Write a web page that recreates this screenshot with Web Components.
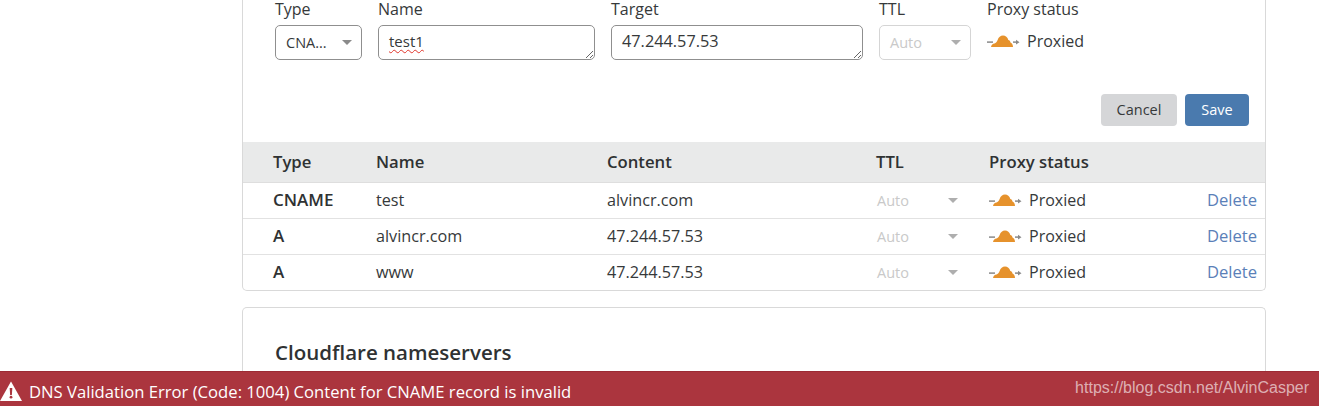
<!DOCTYPE html>
<html lang="en">
<head>
<meta charset="utf-8">
<title>DNS</title>
<style>
    html, body { margin: 0; height: 100%; overflow: hidden; background: #fff; }
    body { font-family: "Open Sans", "Noto Sans", sans-serif; font-size: 15px; color: #36393a; }
    main { display: flex; flex-direction: column; gap: 16px; width: 1024px; height: 406px; margin-left: 242px; overflow: hidden; }
</style>
</head>
<body>
<main>
    <dns-card>
        <dns-form></dns-form>
        <dns-table>
            <dns-row type="CNAME" name="test" content="alvincr.com"></dns-row>
            <dns-row type="A" name="alvincr.com" content="47.244.57.53"></dns-row>
            <dns-row type="A" name="www" content="47.244.57.53"></dns-row>
        </dns-table>
    </dns-card>
    <dns-card open-bottom>
        <h2 slot="heading">Cloudflare nameservers</h2>
    </dns-card>
</main>
<error-bar>DNS Validation Error (Code: 1004) Content for CNAME record is invalid</error-bar>

<script>
class DnsCard extends HTMLElement {
    connectedCallback() {
        this.attachShadow({ mode: 'open' });
        this.shadowRoot.innerHTML = `
            <style>
                :host {
                    display: block;
                    flex: none;
                    border: 1px solid #d9d9d9;
                    border-top: 0;
                    border-radius: 0 0 5px 5px;
                    box-sizing: border-box;
                }
                :host([open-bottom]) {
                    border-top: 1px solid #d9d9d9;
                    border-radius: 5px 5px 0 0;
                    padding: 31px 32px 0;
                    height: 99px;
                    border-bottom: 0;
                }
                ::slotted(h2) {
                    margin: 0;
                    font-size: 20.500px;
                    line-height: 27px;
                    font-weight: 600;
                    color: #2f3233;
                }
            </style>
            <slot name="heading"></slot>
            <slot></slot>
        `;
    }
}

class CfSelect extends HTMLElement {
    connectedCallback() {
        this.attachShadow({ mode: 'open' });
        this.shadowRoot.innerHTML = `
            <style>
                :host {
                    display: flex;
                    align-items: center;
                    justify-content: space-between;
                    box-sizing: border-box;
                    height: 35px;
                    padding: 0 9px 0 10px;
                    border: 1px solid #8f8f8f;
                    border-radius: 5px;
                    font-size: 14.500px;
                    color: #36393a;
                }
                :host([disabled]) { border-color: #d5d5d5; color: #c9c9c9; }
                :host([bare]) { border: 0; padding: 0; height: 35px; color: #c9c9c9; }
                span:first-child { margin-bottom: 6px; }
                :host([bare]) span:first-child { margin-bottom: 2px; }
                .caret {
                    width: 0;
                    height: 0;
                    margin-bottom: 1px;
                    border-left: 5px solid transparent;
                    border-right: 5px solid transparent;
                    border-top: 5px solid #8a8a8a;
                }
                :host([disabled]) .caret, :host([bare]) .caret { border-top-color: #aeaeae; }
            </style>
            <span><slot></slot></span>
            <span class="caret"></span>
        `;
    }
}

class CfField extends HTMLElement {
    connectedCallback() {
        this.attachShadow({ mode: 'open' });
        this.shadowRoot.innerHTML = `
            <style>
                :host {
                    display: block;
                    box-sizing: border-box;
                    width: 100%;
                    height: 35px;
                    padding: 5px 10px 0;
                    border: 1px solid #8f8f8f;
                    border-radius: 5px;
                    font-size: 16.300px;
                    line-height: 20px;
                    color: #36393a;
                    resize: both;
                    overflow: hidden;
                }
                ::slotted(span) {
                    font-size: 15px;
                    text-decoration: underline wavy #e0352b 1px;
                    text-underline-offset: 2px;
                }
            </style>
            <slot></slot>
        `;
    }
}

class CfProxy extends HTMLElement {
    connectedCallback() {
        this.attachShadow({ mode: 'open' });
        this.shadowRoot.innerHTML = `
            <style>
                :host { display: inline-flex; align-items: center; gap: 7px; font-size: 16px; }
                svg { display: block; width: 33px; height: 14px; }
                span { margin-bottom: 2px; }
            </style>
            <svg viewBox="0 0 33 14" aria-hidden="true">
                <path d="M0 7.200h6M26 7.200h4" stroke="#9a9a9a" stroke-width="1.800" fill="none"/>
                <path d="M29 4.800l3.500 2.400-3.500 2.400z" fill="#8a8a8a"/>
                <path d="M4 12C4.400 10 5.800 8.800 7.500 8.600 8.800 7.800 10 7 10.600 5 11.600 2 13.500.5 16 .5c2.500 0 4.600 1.700 5.300 4.500 1.200 0 1.900 1 2.200 2.500C25.200 8 26 10 26 12z" fill="#e6922c"/>
            </svg>
            <span>Proxied</span>
        `;
    }
}

class DnsForm extends HTMLElement {
    connectedCallback() {
        this.attachShadow({ mode: 'open' });
        this.shadowRoot.innerHTML = `
            <style>
                :host { display: block; padding: 0 16px 16px 32px; }
                .fields {
                    display: grid;
                    grid-template-columns: 87px 217px 252px 92px auto;
                    grid-template-rows: 19px 35px;
                    column-gap: 16px;
                    row-gap: 6px;
                    justify-content: start;
                }
                label { font-size: 16px; line-height: 19px; }
                cf-proxy { margin-bottom: 2px; }
                .actions { display: flex; justify-content: flex-end; gap: 8px; margin-top: 34px; }
                button {
                    font: inherit;
                    font-size: 14.500px;
                    height: 32px;
                    padding: 0 0 2px;
                    border: 0;
                    border-radius: 4px;
                }
                .cancel { width: 76px; background: #d5d6d8; color: #36393a; }
                .save { width: 64px; background: #4a7aae; color: #fff; }
            </style>
            <div class="fields">
                <label>Type</label>
                <label>Name</label>
                <label>Target</label>
                <label>TTL</label>
                <label>Proxy status</label>
                <cf-select>CNA...</cf-select>
                <cf-field><span>test1</span></cf-field>
                <cf-field>47.244.57.53</cf-field>
                <cf-select disabled>Auto</cf-select>
                <cf-proxy></cf-proxy>
            </div>
            <div class="actions">
                <button class="cancel">Cancel</button>
                <button class="save">Save</button>
            </div>
        `;
    }
}

class DnsTable extends HTMLElement {
    connectedCallback() {
        this.attachShadow({ mode: 'open' });
        this.shadowRoot.innerHTML = `
            <style>
                :host { display: block; }
                .head {
                    display: grid;
                    grid-template-columns: 103px 231px 269px 113px 1fr;
                    align-items: center;
                    height: 41px;
                    padding: 0 0 2px 30px;
                    box-sizing: border-box;
                    background: #e9eaea;
                    border-bottom: 1px solid #dedede;
                    font-size: 16.700px;
                    font-weight: 600;
                    color: #2f3233;
                }
            </style>
            <div class="head">
                <span>Type</span>
                <span>Name</span>
                <span>Content</span>
                <span>TTL</span>
                <span>Proxy status</span>
            </div>
            <slot></slot>
        `;
    }
}

class DnsRow extends HTMLElement {
    connectedCallback() {
        this.attachShadow({ mode: 'open' });
        this.shadowRoot.innerHTML = `
            <style>
                :host { display: block; }
                .row {
                    display: grid;
                    grid-template-columns: 103px 231px 269px 113px 1fr auto;
                    align-items: center;
                    height: 36px;
                    box-sizing: border-box;
                    padding: 0 8px 0 30px;
                    border-bottom: 1px solid #e2e2e2;
                    font-size: 16.200px;
                }
                :host(:last-child) .row { border-bottom: 0; height: 35px; }
                span { margin-bottom: 2px; }
                .type { font-size: 17px; font-weight: 600; color: #2f3233; }
                cf-select { width: 81px; margin-left: 1px; font-size: 14.500px; }
                a { color: #5a80b8; font-size: 16.600px; text-decoration: none; margin-bottom: 2px; }
            </style>
            <div class="row">
                <span class="type">${this.getAttribute('type')}</span>
                <span>${this.getAttribute('name')}</span>
                <span>${this.getAttribute('content')}</span>
                <cf-select bare>Auto</cf-select>
                <cf-proxy></cf-proxy>
                <a href="#">Delete</a>
            </div>
        `;
    }
}

class ErrorBar extends HTMLElement {
    connectedCallback() {
        this.attachShadow({ mode: 'open' });
        this.shadowRoot.innerHTML = `
            <style>
                :host {
                    position: fixed;
                    left: 0;
                    right: 0;
                    bottom: 0;
                    height: 35px;
                    box-sizing: border-box;
                    display: flex;
                    align-items: center;
                    gap: 7px;
                    background: #ab353e;
                    border-top: 1px solid #9c2a34;
                    color: #fff;
                    font-size: 16.650px;
                }
                svg { width: 22px; height: 20px; margin-top: 3px; flex: none; }
                .msg { margin-top: 4px; }
                .mark {
                    position: absolute;
                    right: 10px;
                    top: 6px;
                    font: 16px/20px "Liberation Sans", Arial, sans-serif;
                    color: rgba(255, 255, 255, .62);
                }
            </style>
            <svg viewBox="0 0 22 20" aria-hidden="true">
                <path d="M11 0.500L22 20H0z" fill="#fff"/>
                <path d="M9.700 7h2.600l-.4 7h-1.800z" fill="#ab353e"/>
                <circle cx="11" cy="16.200" r="1.400" fill="#ab353e"/>
            </svg>
            <span class="msg"><slot></slot></span>
            <span class="mark">https://blog.csdn.net/AlvinCasper</span>
        `;
    }
}

customElements.define('dns-card', DnsCard);
customElements.define('cf-select', CfSelect);
customElements.define('cf-field', CfField);
customElements.define('cf-proxy', CfProxy);
customElements.define('dns-form', DnsForm);
customElements.define('dns-table', DnsTable);
customElements.define('dns-row', DnsRow);
customElements.define('error-bar', ErrorBar);
</script>
</body>
</html>
